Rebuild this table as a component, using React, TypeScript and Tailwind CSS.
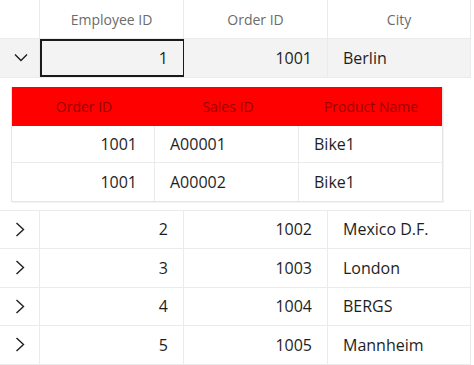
type Order = { employeeId: number; orderId: number; city: string };
type Sale = { orderId: number; salesId: string; product: string };

const orders: Order[] = [
  { employeeId: 1, orderId: 1001, city: "Berlin" },
  { employeeId: 2, orderId: 1002, city: "Mexico D.F." },
  { employeeId: 3, orderId: 1003, city: "London" },
  { employeeId: 4, orderId: 1004, city: "BERGS" },
  { employeeId: 5, orderId: 1005, city: "Mannheim" },
];

const sales: Sale[] = [
  { orderId: 1001, salesId: "A00001", product: "Bike1" },
  { orderId: 1001, salesId: "A00002", product: "Bike1" },
];

// thin expander glyphs, drawn in a 40px indent cell
function ExpanderIcon({ open }: { open?: boolean }) {
  return open ? (
    <svg width="14" height="9" viewBox="0 0 14 9" className="ml-[2px]">
      <polyline points="1,1.5 7,7.5 13,1.5" fill="none" stroke="#1e1e1e" strokeWidth="1.4" />
    </svg>
  ) : (
    <svg width="10" height="15" viewBox="0 0 10 15" className="ml-[1px]">
      <polyline points="1.5,1 8.5,7.5 1.5,14" fill="none" stroke="#1e1e1e" strokeWidth="1.4" />
    </svg>
  );
}

function HeaderRow() {
  return (
    <div className="flex h-[39px] border-b border-[#ebebeb] text-[14px] text-[#6b6b6b]">
      <div className="w-[40px] border-r border-[#ebebeb]" />
      <div className="flex w-[144px] items-center justify-center border-r border-[#ebebeb]">Employee ID</div>
      <div className="flex w-[144px] items-center justify-center border-r border-[#ebebeb]">Order ID</div>
      <div className="flex w-[143px] items-center justify-center border-r border-[#ebebeb]">City</div>
    </div>
  );
}

function OrderRow({ row, expanded }: { row: Order; expanded?: boolean }) {
  return (
    <div
      className={`flex h-[38.5px] border-b border-[#ebebeb] text-[16px] text-[#1e1e1e] ${
        expanded ? "bg-[#f3f3f3]" : "bg-white"
      }`}
    >
      <div className="flex w-[40px] items-center justify-center border-r border-[#ebebeb]">
        <ExpanderIcon open={expanded} />
      </div>
      <div
        className={`flex w-[144px] items-center justify-end border-r pr-[15px] ${
          expanded ? "border-2 border-[#1a1a1a] pr-[14px]" : "border-[#ebebeb]"
        }`}
      >
        {row.employeeId}
      </div>
      <div className="flex w-[144px] items-center justify-end border-r border-[#ebebeb] pr-[15px]">
        {row.orderId}
      </div>
      <div className="flex w-[143px] items-center border-r border-[#ebebeb] pl-[15px]">{row.city}</div>
    </div>
  );
}

function DetailGrid() {
  return (
    <div className="border-b border-[#ebebeb] pb-[8px] pl-[11px] pr-[28px] pt-[9px]">
      <div className="border border-t-0 border-[#e6e6e6] shadow-[1px_1px_0_#f2f2f2]">
        <div className="flex h-[39px] bg-[#ff0000] text-[14px] text-[#9a0000]">
          <div className="flex w-[144px] items-center justify-center">Order ID</div>
          <div className="flex w-[144px] items-center justify-center">Sales ID</div>
          <div className="flex flex-1 items-center justify-center">Product Name</div>
        </div>
        {sales.map((s, i) => (
          <div
            key={s.salesId}
            className={`flex h-[37.5px] text-[16px] text-[#1e1e1e] ${
              i < sales.length - 1 ? "border-b border-[#ebebeb]" : ""
            }`}
          >
            <div className="flex w-[143px] items-center justify-end border-r border-[#ebebeb] pr-[17px]">
              {s.orderId}
            </div>
            <div className="flex w-[144px] items-center border-r border-[#ebebeb] pl-[15px]">{s.salesId}</div>
            <div className="flex flex-1 items-center pl-[15px]">{s.product}</div>
          </div>
        ))}
      </div>
    </div>
  );
}

export default function App() {
  return (
    <div
      className="h-[365px] w-[474px] overflow-hidden bg-white"
      style={{ fontFamily: '"Open Sans", "Noto Sans", sans-serif' }}
    >
      <div className="w-[471px]">
        <HeaderRow />
        <OrderRow row={orders[0]} expanded />
        <DetailGrid />
        {orders.slice(1).map((o) => (
          <OrderRow key={o.employeeId} row={o} />
        ))}
      </div>
    </div>
  );
}
